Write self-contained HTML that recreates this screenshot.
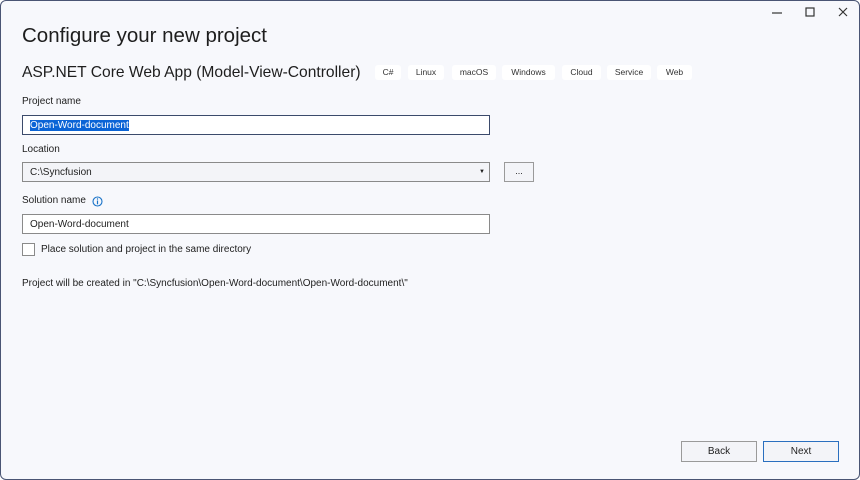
<!DOCTYPE html>
<html><head><meta charset="utf-8"><style>
*{margin:0;padding:0;box-sizing:border-box}
body{width:860px;height:480px;background:#fff;font-family:"Liberation Sans",sans-serif;color:#1e1e1e;position:relative;overflow:hidden}
.win{position:absolute;left:0;top:0;width:860px;height:480px;background:#f7f8fc;border:1px solid #4a5574;border-radius:6px}
.a{position:absolute;white-space:nowrap}
.lbl{font-size:10px;color:#1e1e1e}
.inp{position:absolute;left:21px;width:468px;height:20px;background:#fff;border:1px solid #8a8a8a;font-size:10px;padding-left:7px;line-height:19px}
.tag{position:absolute;top:64px;height:15px;background:#fff;border-radius:3px;font-size:8.5px;line-height:15px;text-align:center;color:#333}
.btn{position:absolute;top:440px;width:76px;height:21px;background:#f3f4f8;border:1px solid #9a9a9a;font-size:10px;text-align:center;line-height:19px}
</style></head><body><div class="win">
<svg class="a" style="left:768px;top:4px" width="85" height="16"><g stroke="#333" stroke-width="1.2" fill="none"><line x1="3" y1="8" x2="13" y2="8"/><rect x="37" y="3" width="8" height="8"/><path d="M70 3l8 8M78 3l-8 8"/></g></svg>
<div class="a" style="left:21px;top:23px;font-size:20.5px;color:#1e1e1e">Configure your new project</div>
<div class="a" style="left:21px;top:63px;font-size:15.6px">ASP.NET Core Web App (Model-View-Controller)</div>
<div class="tag" style="left:374px;width:26px">C#</div>
<div class="tag" style="left:407px;width:36px">Linux</div>
<div class="tag" style="left:451px;width:44px">macOS</div>
<div class="tag" style="left:501px;width:53px">Windows</div>
<div class="tag" style="left:561px;width:39px">Cloud</div>
<div class="tag" style="left:606px;width:44px">Service</div>
<div class="tag" style="left:656px;width:35px">Web</div>
<div class="a lbl" style="left:21px;top:95px">Project name</div>
<div class="inp" style="top:114px;border:1px solid #3b4a6b"><span style="background:#0a64d6;color:#fff">Open-Word-document</span></div>
<div class="a lbl" style="left:21px;top:143px">Location</div>
<div class="inp" style="top:161px;background:#f3f4f8">C:\Syncfusion<span style="position:absolute;right:4px;top:0;font-size:6px">▼</span></div>
<div class="a" style="left:503px;top:161px;width:30px;height:20px;border:1px solid #9a9a9a;background:#f3f4f8;font-size:9px;text-align:center;line-height:16px">...</div>
<div class="a lbl" style="left:21px;top:194px">Solution name</div>
<svg class="a" style="left:91px;top:195px" width="11" height="11"><circle cx="5.5" cy="5.5" r="4.5" fill="none" stroke="#1a73c8" stroke-width="1.1"/><line x1="5.5" y1="4.5" x2="5.5" y2="8.3" stroke="#1a73c8" stroke-width="1.2"/><circle cx="5.5" cy="3" r=".7" fill="#1a73c8"/></svg>
<div class="inp" style="top:213px">Open-Word-document</div>
<div class="a" style="left:21px;top:242px;width:13px;height:13px;border:1px solid #8a8a8a;background:#fff"></div>
<div class="a lbl" style="left:40px;top:243px">Place solution and project in the same directory</div>
<div class="a lbl" style="left:21px;top:277px">Project will be created in "C:\Syncfusion\Open-Word-document\Open-Word-document\"</div>
<div class="btn" style="left:680px">Back</div>
<div class="btn" style="left:762px;border:1px solid #2a6fbf">Next</div>
</div></body></html>
